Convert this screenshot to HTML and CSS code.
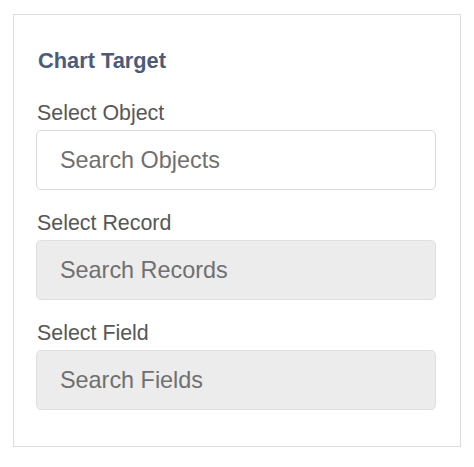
FILE: index.html
```
<!DOCTYPE html>
<html>
<head>
<meta charset="utf-8">
<link rel="stylesheet" href="styles.css">
</head>
<body>
<div class="panel">
  <h2 class="title">Chart Target</h2>
  <div class="field">
    <label class="label">Select Object</label>
    <input class="input" type="text" placeholder="Search Objects">
  </div>
  <div class="field">
    <label class="label">Select Record</label>
    <input class="input input-disabled" type="text" placeholder="Search Records" disabled>
  </div>
  <div class="field">
    <label class="label">Select Field</label>
    <input class="input input-disabled" type="text" placeholder="Search Fields" disabled>
  </div>
</div>
</body>
</html>
```
FILE: styles.css
```
html, body {
  margin: 0;
  padding: 0;
  background: #ffffff;
}
body {
  font-family: "Liberation Sans", Arial, sans-serif;
}
.panel {
  box-sizing: border-box;
  width: 448px;
  margin: 14px 0 0 13px;
  border: 1px solid #dcdcdc;
  padding: 34px 24px 36px 22px;
  display: flex;
  flex-direction: column;
}
.title {
  margin: 0 0 28px 2px;
  font-size: 21.8px;
  line-height: 24px;
  font-weight: bold;
  color: #4d5b78;
}
.field {
  display: flex;
  flex-direction: column;
  margin-bottom: 21px;
}
.field:last-child {
  margin-bottom: 0;
}
.label {
  font-size: 21.4px;
  line-height: 24px;
  color: #575757;
  margin: 0 0 5px 1px;
}
.input {
  box-sizing: border-box;
  width: 400px;
  height: 60px;
  margin: 0;
  padding: 0 0 0 23px;
  border: 1px solid #dadada;
  border-radius: 5px;
  background: #ffffff;
  font-family: "Liberation Sans", Arial, sans-serif;
  font-size: 23.4px;
  color: #707070;
  outline: none;
}
.input::placeholder {
  color: #707070;
  opacity: 1;
}
.input-disabled {
  background: #ececec;
  border-color: #e0e0e0;
}
```
